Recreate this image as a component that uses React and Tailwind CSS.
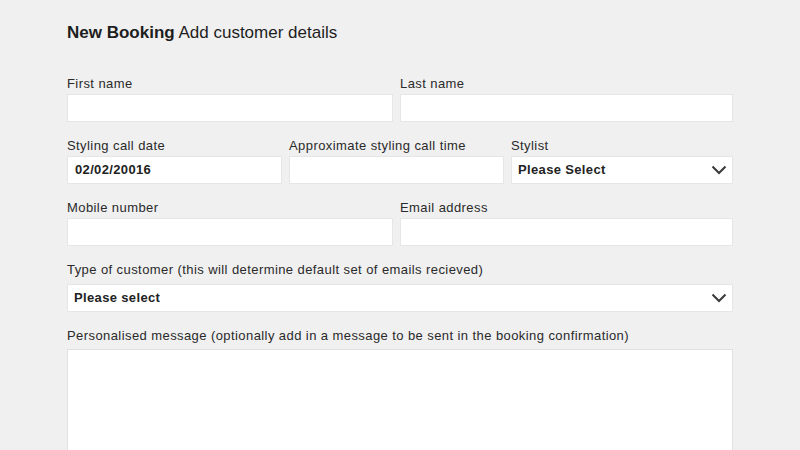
import React from "react";

const font = { fontFamily: '"Liberation Sans", Arial, sans-serif' };

function Label({ children, mb = "mb-[2px]" }) {
  return (
    <div className={`text-[13px] leading-[17px] tracking-[0.42px] text-[#2a2a2a] whitespace-nowrap ${mb}`}>
      {children}
    </div>
  );
}

function Input({ value }) {
  return (
    <div className="h-[28px] bg-white border border-[#e6e6e6] flex items-center pl-[7px] text-[13px] font-bold tracking-[0.35px] text-[#222]">
      {value}
    </div>
  );
}

function Chevron() {
  return (
    <svg width="16" height="10" viewBox="0 0 16 10" className="shrink-0">
      <polyline points="1.5,1.5 8,8 14.5,1.5" fill="none" stroke="#3a3a3a" strokeWidth="2" />
    </svg>
  );
}

function Select({ value }) {
  return (
    <div className="h-[28px] bg-white border border-[#e6e6e6] flex items-center justify-between pl-[6px] pr-[5px] text-[13px] font-bold tracking-[0.35px] text-[#222]">
      <span>{value}</span>
      <Chevron />
    </div>
  );
}

export default function App() {
  return (
    <div className="w-[800px] h-[450px] overflow-hidden bg-[#f0f0f0]" style={font}>
      <div className="pl-[67px] w-[733px] pt-[22px]">
        <div className="text-[17px] leading-[22px] text-[#1e1e1e] mb-[31px]">
          <span className="font-bold">New Booking</span> Add customer details
        </div>

        <div className="grid grid-cols-[326px_333px] gap-x-[7px] mb-[15px]">
          <div>
            <Label>First name</Label>
            <Input />
          </div>
          <div>
            <Label>Last name</Label>
            <Input />
          </div>
        </div>

        <div className="grid grid-cols-[215px_215px_222px] gap-x-[7px] mb-[15px]">
          <div>
            <Label>Styling call date</Label>
            <Input value="02/02/20016" />
          </div>
          <div>
            <Label>Approximate styling call time</Label>
            <Input />
          </div>
          <div>
            <Label>Stylist</Label>
            <Select value="Please Select" />
          </div>
        </div>

        <div className="grid grid-cols-[326px_333px] gap-x-[7px] mb-[15px]">
          <div>
            <Label>Mobile number</Label>
            <Input />
          </div>
          <div>
            <Label>Email address</Label>
            <Input />
          </div>
        </div>

        <div className="mb-[15px]">
          <Label mb="mb-[6px]">Type of customer (this will determine default set of emails recieved)</Label>
          <Select value="Please select" />
        </div>

        <div>
          <Label mb="mb-[5px]">Personalised message (optionally add in a message to be sent in the booking confirmation)</Label>
          <div className="h-[120px] bg-white border border-[#e0e0e0]" />
        </div>
      </div>
    </div>
  );
}
